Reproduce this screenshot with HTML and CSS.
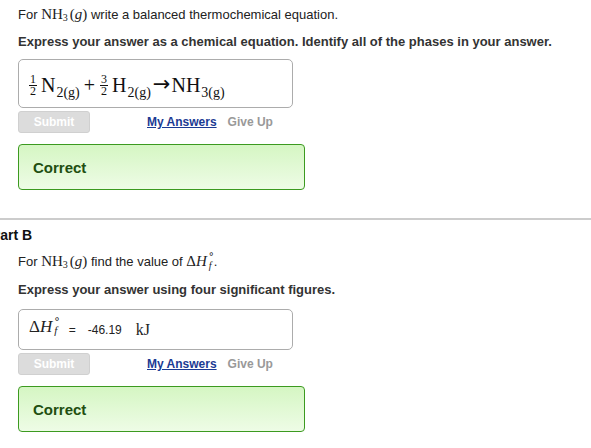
FILE: index.html
```html
<!DOCTYPE html>
<html lang="en">
<head>
    <meta charset="UTF-8">
    <meta name="viewport" content="width=device-width, initial-scale=1.0">
    <title>Part A / Part B</title>
    <link rel="stylesheet" href="styles.css">
</head>
<body>
    <div class="part part-a">
        <p class="prompt">For <span class="m">NH<sub>3</sub><span class="paren">(<i>g</i>)</span></span> write a balanced thermochemical equation.</p>
        <p class="instr">Express your answer as a chemical equation. Identify all of the phases in your answer.</p>

        <div class="answer answer-eq">
            <span class="eq">
                <span class="frac"><span>1</span><span class="den">2</span></span>N<span class="sub">2(g)</span>
                <span class="op">+</span>
                <span class="frac"><span>3</span><span class="den">2</span></span>H<span class="sub">2(g)</span><span class="arrow">&rarr;</span>NH<span class="sub">3(g)</span>
            </span>
        </div>

        <div class="actions">
            <button class="submit" disabled>Submit</button>
            <a class="my-answers" href="#">My Answers</a>
            <a class="give-up" href="#">Give Up</a>
        </div>

        <div class="correct">Correct</div>
    </div>

    <div class="sep"></div>

    <div class="part part-b">
        <h3 class="part-title">Part B</h3>
        <p class="prompt">For <span class="m">NH<sub>3</sub><span class="paren">(<i>g</i>)</span></span> find the value of <span class="m dh">&Delta;<i>H</i><span class="supsub"><span>&deg;</span><i>f</i></span></span>.</p>
        <p class="instr">Express your answer using four significant figures.</p>

        <div class="answer answer-num">
            <span class="m dh big">&Delta;<i>H</i><span class="supsub"><span>&deg;</span><i>f</i></span></span>
            <span class="eqsign">=</span>
            <span class="value">-46.19</span>
            <span class="m unit">kJ</span>
        </div>

        <div class="actions">
            <button class="submit" disabled>Submit</button>
            <a class="my-answers" href="#">My Answers</a>
            <a class="give-up" href="#">Give Up</a>
        </div>

        <div class="correct">Correct</div>
    </div>
</body>
</html>
```

FILE: styles.css
```css
body {
    margin: 0;
    font-family: 'Liberation Sans', Arial, Helvetica, sans-serif;
    font-size: 12px;
    color: #222;
    background-color: #fff;
    overflow: hidden;
}
.part {
    padding-left: 18px;
}
p {
    margin: 0;
}
.prompt {
    height: 20px;
    line-height: 20px;
    margin-top: 5px;
    font-size: 13px;
    color: #222;
}
.instr {
    height: 20px;
    line-height: 20px;
    margin-top: 7px;
    font-size: 13px;
    font-weight: bold;
    color: #333;
}
.m {
    font-family: 'Liberation Serif', 'Times New Roman', serif;
    font-size: 15px;
    line-height: 1;
}
.m sub {
    font-size: 10px;
    vertical-align: -2px;
    line-height: 0;
}
.paren {
    margin-left: 2px;
}
.answer {
    box-sizing: border-box;
    width: 275px;
    border: 1px solid #acacac;
    border-radius: 5px;
    display: flex;
    align-items: center;
    padding-left: 10px;
    margin-top: 7px;
}
.answer-eq {
    height: 49px;
}
.eq {
    font-family: 'Liberation Serif', 'Times New Roman', serif;
    font-size: 20px;
    color: #111;
    display: flex;
    align-items: baseline;
    padding-top: 2px;
}
.frac {
    display: inline-flex;
    flex-direction: column;
    align-items: center;
    font-size: 12px;
    line-height: 11px;
    margin-right: 4px;
    align-self: center;
    position: relative;
    top: 1px;
}
.frac .den {
    border-top: 1px solid #111;
    padding: 0 1px;
}
.sub {
    font-size: 14px;
    position: relative;
    top: 5px;
    margin-left: 1px;
}
.op {
    margin: 0 5px 0 4px;
}
.arrow {
    margin: 0 1px 0 2px;
    font-family: 'DejaVu Sans', sans-serif;
    font-size: 21px;
    position: relative;
    top: -1px;
}
.actions {
    display: flex;
    align-items: center;
    height: 22px;
    margin-top: 3px;
}
.submit {
    box-sizing: border-box;
    width: 72px;
    height: 22px;
    border: 1px solid #d0d0d0;
    border-radius: 3px;
    background-color: #dcdcdc;
    color: #fff;
    font-family: 'Liberation Sans', Arial, sans-serif;
    font-size: 12px;
    font-weight: bold;
    padding: 0;
}
.my-answers {
    margin-left: 57px;
    color: #1b3a93;
    font-weight: bold;
    text-decoration: underline;
}
.give-up {
    margin-left: 11px;
    color: #999;
    font-weight: bold;
    text-decoration: none;
}
.correct {
    box-sizing: border-box;
    width: 287px;
    height: 46px;
    margin-top: 11px;
    border: 1px solid #3c9a20;
    border-radius: 4px;
    background: linear-gradient(#d5f6c3, #eefce6);
    color: #214f10;
    font-size: 15px;
    font-weight: bold;
    display: flex;
    align-items: center;
    padding-left: 14px;
}
.sep {
    height: 2px;
    background-color: #cccccc;
    margin-top: 28px;
}
.part-title {
    height: 20px;
    margin: 5px 0 0 -27px;
    font-size: 14px;
    line-height: 20px;
    color: #111;
}
.part-b .prompt {
    margin-top: 7px;
}
.part-b .instr {
    margin-top: 8px;
}
.part-b .answer {
    margin-top: 9px;
    height: 41px;
}
.dh {
    display: inline-flex;
    align-items: baseline;
}
.dh i {
    font-style: italic;
}
.supsub {
    display: inline-flex;
    flex-direction: column;
    align-items: flex-start;
    font-size: 10px;
    line-height: 8px;
    margin-left: 2px;
    position: relative;
    top: -6px;
}
.supsub span {
    font-family: 'DejaVu Sans', sans-serif;
    font-size: 10px;
    line-height: 8px;
}
.supsub i {
    line-height: 9px;
}
.big {
    font-size: 17px;
}
.big .supsub {
    font-size: 11px;
    line-height: 9px;
    top: -7px;
}
.big .supsub span {
    font-size: 11px;
    line-height: 9px;
}
.eqsign {
    margin-left: 9px;
    font-size: 12px;
}
.value {
    margin-left: 12px;
    font-size: 12px;
}
.unit {
    margin-left: 14px;
    font-size: 16px;
}
```
